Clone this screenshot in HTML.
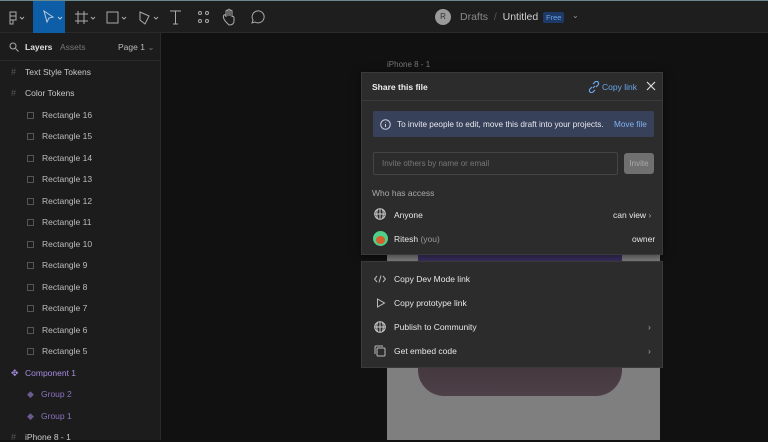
<!DOCTYPE html>
<html><head><style>
*{margin:0;padding:0;box-sizing:border-box}
body{width:768px;height:440px;overflow:hidden;background:#111;font-family:"Liberation Sans",sans-serif;position:relative;color:#e6e6e6}
.abs{position:absolute}
.top{left:0;top:0;width:768px;height:33px;background:#1e1e1e;border-top:1px solid #6a8a90;border-bottom:1px solid #2a2a2a}
.left{left:0;top:33px;width:161px;height:407px;background:#1c1c1c;border-right:1px solid #2a2a2a}
.row{position:absolute;font-size:8.5px;color:#bdbdbd;white-space:nowrap}
.sq{display:inline-block;width:7px;height:7px;border:1px solid #555;margin-right:8px;vertical-align:-1px}
.hash{display:inline-block;width:8px;color:#555;margin-right:6px;font-size:9px}
.dlg{left:361px;top:72px;width:302px;height:183px;background:#2c2c2c;border:1px solid #3a3a3a;box-shadow:0 2px 8px rgba(0,0,0,.5)}
.menu{left:361px;top:261px;width:302px;height:107px;background:#2c2c2c;border:1px solid #3a3a3a}
.t{position:absolute;font-size:8.5px;white-space:nowrap}
</style></head><body>
<div class="abs top"></div>
<div class="abs" style="left:33px;top:1px;width:32px;height:32px;background:#0d5ea6"></div>
<svg class="abs" style="left:0;top:0" width="280" height="33" fill="none" stroke="#aaa" stroke-width="1">
<path d="M10 12h6v4h-6zM10 16h6v4h-6zM10 20h3v4h-3z" /><path d="M20 17l2 2 2-2"/>
<path d="M44 11l9 6-4 1-2 4z" stroke="#bcd"/><path d="M58 17l2 2 2-2" stroke="#bcd"/>
<path d="M78 11v13M84 11v13M75 14h13M75 21h13"/><path d="M91 17l2 2 2-2"/>
<rect x="107" y="12" width="11" height="11"/><path d="M122 17l2 2 2-2"/>
<path d="M140 12l9 4-4 8-5-4z"/><path d="M154 17l2 2 2-2"/>
<path d="M170 11h11M175.5 11v13M173 24h5"/>
<circle cx="200" cy="13" r="1.5"/><circle cx="207" cy="13" r="1.5"/><circle cx="200" cy="21" r="1.5"/><circle cx="207" cy="21" r="1.5"/>
<path d="M226 22c-3-3-3-6-2-7s2 1 2 2v-6c0-1 2-1 2 0v5-6c0-1 2-1 2 0v6-5c0-1 2-1 2 0v6c0-1 2-1 2 1v3c0 3-2 4-5 4z"/>
<path d="M252 23l1-3a6 6 0 1 1 2 2z"/>
</svg>
<div class="abs" style="left:435px;top:9px;width:16px;height:16px;border-radius:50%;background:#9a9a9a;color:#333;font-size:8px;text-align:center;line-height:16px">R</div>
<div class="t" style="left:460px;top:11px;font-size:10.5px;color:#8a8a8a">Drafts &nbsp;<span style="color:#555">/</span>&nbsp; <span style="color:#cfcfcf">Untitled</span></div>
<div class="abs" style="left:543px;top:12px;padding:1px 3px;background:#1d3a66;color:#6aa0e6;font-size:7.5px;border-radius:2px">Free</div>
<div class="t" style="left:572px;top:11px;color:#999;font-size:8px">⌄</div>

<div class="abs left"></div>
<div class="abs" style="left:0;top:60px;width:161px;height:1px;background:#2a2a2a"></div>
<svg class="abs" style="left:9px;top:42px" width="10" height="10" fill="none" stroke="#aaa"><circle cx="4" cy="4" r="3"/><path d="M6.5 6.5l3 3"/></svg>
<div class="t" style="left:25px;top:42px;color:#e0e0e0;font-weight:bold">Layers</div>
<div class="t" style="left:60px;top:42px;color:#777">Assets</div>
<div class="t" style="left:118px;top:42px;color:#bbb">Page 1 <span style="color:#777">⌄</span></div>
<div class="row" style="left:11px;top:67px;color:#c8c8c8"><span class="hash">#</span>Text Style Tokens</div>
<div class="row" style="left:11px;top:88px;color:#c8c8c8"><span class="hash">#</span>Color Tokens</div>
<div class="row" style="left:27px;top:110px"><span class="sq"></span>Rectangle 16</div>
<div class="row" style="left:27px;top:131px"><span class="sq"></span>Rectangle 15</div>
<div class="row" style="left:27px;top:153px"><span class="sq"></span>Rectangle 14</div>
<div class="row" style="left:27px;top:174px"><span class="sq"></span>Rectangle 13</div>
<div class="row" style="left:27px;top:196px"><span class="sq"></span>Rectangle 12</div>
<div class="row" style="left:27px;top:217px"><span class="sq"></span>Rectangle 11</div>
<div class="row" style="left:27px;top:239px"><span class="sq"></span>Rectangle 10</div>
<div class="row" style="left:27px;top:260px"><span class="sq"></span>Rectangle 9</div>
<div class="row" style="left:27px;top:282px"><span class="sq"></span>Rectangle 8</div>
<div class="row" style="left:27px;top:303px"><span class="sq"></span>Rectangle 7</div>
<div class="row" style="left:27px;top:325px"><span class="sq"></span>Rectangle 6</div>
<div class="row" style="left:27px;top:346px"><span class="sq"></span>Rectangle 5</div>
<div class="row" style="left:11px;top:368px;color:#a88be0"><span class="hash" style="color:#a88be0">✥</span>Component 1</div>
<div class="row" style="left:27px;top:389px;color:#8a74c0"><span class="hash" style="color:#6a5a90">◆</span>Group 2</div>
<div class="row" style="left:27px;top:411px;color:#8a74c0"><span class="hash" style="color:#6a5a90">◆</span>Group 1</div>
<div class="row" style="left:11px;top:432px;color:#c8c8c8"><span class="hash">#</span>iPhone 8 - 1</div>

<div class="t" style="left:387px;top:60px;color:#777;font-size:8px">iPhone 8 - 1</div>
<div class="abs" style="left:387px;top:72px;width:273px;height:368px;background:#7f7f7f"></div>
<div class="abs" style="left:418px;top:250px;width:204px;height:11px;background:#3a3060"></div>
<div class="abs" style="left:418px;top:340px;width:204px;height:56px;border-radius:0 0 26px 26px;background:linear-gradient(#3c3036,#4e4047)"></div>

<div class="abs dlg">
<div class="t" style="left:10px;top:9px;color:#f0f0f0;font-weight:bold">Share this file</div>
<svg class="abs" style="left:226px;top:8px" width="12" height="12" fill="none" stroke="#6aa8ee" stroke-width="1.2"><path d="M5 7l2-2M4 6l-2 2a2 2 0 0 0 3 3l2-2M8 6l2-2a2 2 0 0 0-3-3l-2 2"/></svg>
<div class="t" style="left:240px;top:9px;color:#6aa8ee">Copy link</div>
<svg class="abs" style="left:284px;top:8px" width="10" height="10" stroke="#ddd" stroke-width="1.2"><path d="M1 1l8 8M9 1l-8 8"/></svg>
<div class="abs" style="left:0;top:27px;width:300px;height:1px;background:#3a3a3a"></div>
<div class="abs" style="left:11px;top:38px;width:281px;height:26px;background:#38415a;border-radius:2px"></div>
<svg class="abs" style="left:18px;top:46px" width="11" height="11" fill="none" stroke="#ccd"><circle cx="5.5" cy="5.5" r="4.8"/><path d="M5.5 5v3M5.5 3v.5"/></svg>
<div class="t" style="left:35px;top:47px;color:#e8e8ee;font-size:8.2px">To invite people to edit, move this draft into your projects.</div>
<div class="t" style="left:252px;top:47px;color:#7fb2f0;font-size:8.2px">Move file</div>
<div class="abs" style="left:11px;top:79px;width:245px;height:23px;border:1px solid #444;border-radius:2px"></div>
<div class="t" style="left:20px;top:86px;color:#777;font-size:8px">Invite others by name or email</div>
<div class="abs" style="left:262px;top:80px;width:30px;height:21px;background:#707070;border-radius:3px;color:#aaa;font-size:8px;text-align:center;line-height:21px">Invite</div>
<div class="t" style="left:10px;top:115px;color:#aaa">Who has access</div>
<svg class="abs" style="left:12px;top:135px" width="12" height="12" fill="none" stroke="#ccc"><circle cx="6" cy="6" r="5.3"/><path d="M.7 6h10.6M6 .7v10.6M3.5 1.5c-1 3-1 6 0 9M8.5 1.5c1 3 1 6 0 9"/></svg>
<div class="t" style="left:32px;top:137px;color:#e8e8e8">Anyone</div>
<div class="t" style="left:251px;top:137px;color:#e8e8e8">can view <span style="color:#aaa">›</span></div>
<div class="abs" style="left:11px;top:158px;width:15px;height:15px;border-radius:50%;background:#4fcf8a;overflow:hidden"><div style="margin:5px 0 0 3px;width:9px;height:8px;background:#d8602a;border-radius:50%"></div></div>
<div class="t" style="left:32px;top:161px;color:#e8e8e8">Ritesh <span style="color:#999">(you)</span></div>
<div class="t" style="left:270px;top:161px;color:#e8e8e8">owner</div>
</div>

<div class="abs menu">
<svg class="abs" style="left:12px;top:12px" width="12" height="10" fill="none" stroke="#bbb"><path d="M3 2L0.5 5 3 8M9 2l2.5 3L9 8M7 1.5l-2 7"/></svg>
<div class="t" style="left:32px;top:12px;color:#e6e6e6">Copy Dev Mode link</div>
<svg class="abs" style="left:14px;top:36px" width="10" height="10" fill="none" stroke="#bbb"><path d="M1.5 1l7 4-7 4z"/></svg>
<div class="t" style="left:32px;top:36px;color:#e6e6e6">Copy prototype link</div>
<svg class="abs" style="left:12px;top:59px" width="12" height="12" fill="none" stroke="#ccc"><circle cx="6" cy="6" r="5.3"/><path d="M.7 6h10.6M6 .7v10.6M3.5 1.5c-1 3-1 6 0 9M8.5 1.5c1 3 1 6 0 9"/></svg>
<div class="t" style="left:32px;top:60px;color:#e6e6e6">Publish to Community</div>
<div class="t" style="left:286px;top:60px;color:#aaa">›</div>
<svg class="abs" style="left:12px;top:83px" width="12" height="12" fill="none" stroke="#bbb"><rect x="3" y="3" width="8" height="8" rx="1"/><path d="M1 9V2a1 1 0 0 1 1-1h7"/></svg>
<div class="t" style="left:32px;top:84px;color:#e6e6e6">Get embed code</div>
<div class="t" style="left:286px;top:84px;color:#aaa">›</div>
</div>
</body></html>
